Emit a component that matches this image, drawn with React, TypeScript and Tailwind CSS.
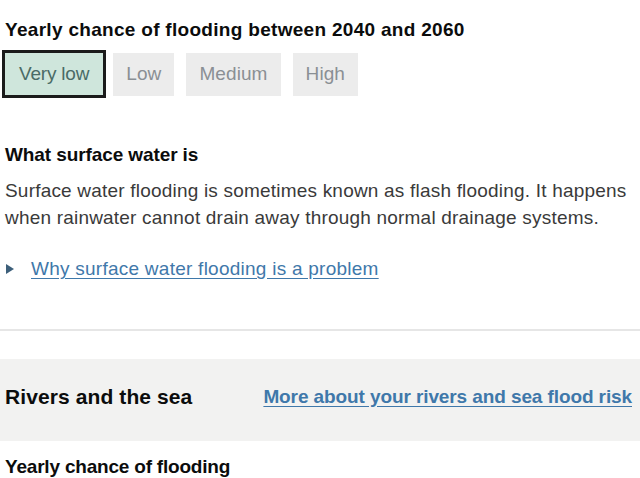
const font = { fontFamily: '"Liberation Sans", Arial, sans-serif' };

function Tab({ label, active }: { label: string; active?: boolean }) {
  if (active) {
    return (
      <div className="h-[48px] px-[14px] -mr-[5px] flex items-center border-[3px] border-[#1b1b1b] bg-[#cfe6dc] text-[19px] tracking-[-0.2px] text-[#4a6b66]">
        {label}
      </div>
    );
  }
  return (
    <div className="h-[43px] px-[13px] flex items-center bg-[#ececec] text-[19px] tracking-[0.1px] text-[#8a8f94]">
      {label}
    </div>
  );
}

export default function App() {
  return (
    <div className="w-[640px] h-[478px] overflow-hidden bg-white text-[#0b0c0c]" style={font}>
      <div className="px-[5px] pt-[18px]">
        <h2 className="text-[19px] font-bold leading-[24px] tracking-[0.3px] whitespace-nowrap">
          Yearly chance of flooding between 2040 and 2060
        </h2>
        <div className="flex items-center gap-[12px] mt-[8px] -ml-[3px]">
          <Tab label="Very low" active />
          <Tab label="Low" />
          <Tab label="Medium" />
          <Tab label="High" />
        </div>
        <h3 className="mt-[45px] text-[19px] font-bold leading-[24px] tracking-[-0.1px]">
          What surface water is
        </h3>
        <p className="mt-[10px] text-[19px] leading-[27px] text-[#3a3a3a] tracking-[0.2px] whitespace-nowrap">
          Surface water flooding is sometimes known as flash flooding. It happens
          <br />
          when rainwater cannot drain away through normal drainage systems.
        </p>
        <div className="mt-[26px] h-[24px] flex items-center gap-[17px]">
          <span className="ml-[1px] w-0 h-0 border-y-[5px] border-y-transparent border-l-[8px] border-l-[#3d5f7a]" />
          <a className="text-[19px] leading-[24px] tracking-[0.25px] text-[#3f78aa] underline underline-offset-[3px] whitespace-nowrap">
            Why surface water flooding is a problem
          </a>
        </div>
      </div>
      <div className="mt-[48px] h-[2px] bg-[#e6e6e6]" />
      <div className="mt-[28px] h-[82px] pb-[6px] bg-[#f2f2f1] px-[5px] flex items-center justify-between">
        <span className="text-[21px] font-bold tracking-[0.1px]">Rivers and the sea</span>
        <a className="text-[19px] font-bold text-[#3f78aa] underline underline-offset-[3px] tracking-[-0.1px] mr-[3px] whitespace-nowrap">
          More about your rivers and sea flood risk
        </a>
      </div>
      <div className="px-[5px] mt-[14px] text-[19px] leading-[24px] tracking-[-0.2px] font-bold">
        Yearly chance of flooding
      </div>
    </div>
  );
}
